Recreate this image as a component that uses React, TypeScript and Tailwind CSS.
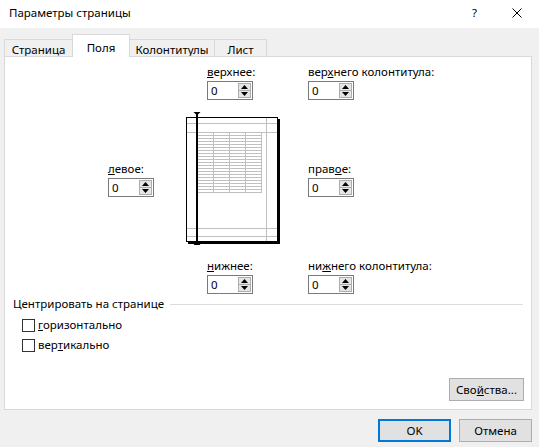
import React from 'react';

function Spin() {
  return (
    <div className="flex h-[19px] w-[46px] border border-[#7a7a7a] bg-white">
      <span className="flex-1 pl-[3px] leading-[17px]">0</span>
      <div className="my-px mr-px flex w-[13px] flex-col border border-[#adadad] bg-[#e5e5e5]">
        <div className="flex flex-1 items-center justify-center border-b border-[#adadad]">
          <svg width="7" height="4" viewBox="0 0 7 4">
            <polygon points="0,4 7,4 3.5,0" fill="#000" />
          </svg>
        </div>
        <div className="flex flex-1 items-center justify-center">
          <svg width="7" height="4" viewBox="0 0 7 4">
            <polygon points="0,0 7,0 3.5,4" fill="#000" />
          </svg>
        </div>
      </div>
    </div>
  );
}

function Field({ label }: { label: React.ReactNode }) {
  return (
    <div className="flex flex-col">
      <span className="h-[14px] whitespace-nowrap leading-[14px]">{label}</span>
      <div className="mt-[2px]">
        <Spin />
      </div>
    </div>
  );
}

function Preview() {
  const rows = [];
  for (let y = 22.5; y <= 83; y += 3) rows.push(y);
  return (
    <svg width="98" height="136" viewBox="0 0 98 136">
      <rect x="4" y="9" width="92" height="125" fill="#000" />
      <rect x="2.5" y="7.5" width="91" height="124" fill="#fff" stroke="#000" />
      {/* header / margins */}
      <line x1="3" y1="13.5" x2="93" y2="13.5" stroke="#c0c0c0" />
      <line x1="3" y1="22.5" x2="93" y2="22.5" stroke="#c0c0c0" />
      <line x1="3" y1="118.5" x2="93" y2="118.5" stroke="#c0c0c0" />
      <line x1="3" y1="126.5" x2="93" y2="126.5" stroke="#c0c0c0" />
      <line x1="82.5" y1="8" x2="82.5" y2="131" stroke="#c0c0c0" />
      {/* table */}
      {rows.map((y) => (
        <line key={y} x1="13" y1={y} x2="78" y2={y} stroke="#c0c0c0" />
      ))}
      {[29.5, 45.5, 61.5, 77.5].map((x) => (
        <line key={x} x1={x} y1="22" x2={x} y2="83" stroke="#c0c0c0" />
      ))}
      {/* selected left margin */}
      <rect x="12" y="3" width="2" height="130" fill="#000" />
      <polygon points="9.5,2 16.5,2 13,5.5" fill="#000" />
      <polygon points="13,131.5 9.5,135 16.5,135" fill="#000" />
    </svg>
  );
}

export default function App() {
  const tabs = [
    { name: 'Страница', w: 'w-[69px]' },
    { name: 'Поля', w: 'w-[58px]', active: true },
    { name: 'Колонтитулы', w: 'w-[86px]' },
    { name: 'Лист', w: 'w-[53px]' },
  ];

  return (
    <div className="flex h-[447px] w-[539px] flex-col bg-[#f0f0f0] font-['Segoe_UI','Noto_Sans',sans-serif] text-[11.5px] text-black">
      {/* Title bar */}
      <div className="flex h-[28px] shrink-0 items-center bg-white pb-[2px] pl-[9px] pr-[17px]">
        <span>Параметры страницы</span>
        <span className="ml-auto">?</span>
        <svg className="ml-[35px]" width="10" height="10" viewBox="0 0 10 10">
          <path d="M0.5 0.5 L9.5 9.5 M9.5 0.5 L0.5 9.5" stroke="#000" strokeWidth="1" />
        </svg>
      </div>

      <div className="flex flex-col pl-[4px] pr-[7px]">
        {/* Tabs */}
        <div className="mt-[7px] flex h-[21px] items-end">
          {tabs.map((t, i) => (
            <div
              key={t.name}
              className={
                t.active
                  ? `relative z-10 -mb-px ${i > 0 ? '-ml-px' : ''} flex h-[23px] items-start justify-center border border-b-0 border-[#d9d9d9] bg-white pt-[4px] ${t.w}`
                  : `${i > 0 ? '-ml-px' : ''} flex h-[17px] items-start justify-center border border-b-0 border-[#d9d9d9] bg-[#f0f0f0] pt-[1px] ${t.w}`
              }
            >
              {t.name}
            </div>
          ))}
        </div>

        {/* Panel */}
        <div className="flex h-[354px] w-[528px] flex-col border border-[#d9d9d9] bg-white">
          <div className="flex pl-[202px] pt-[8px]">
            <div className="w-[101px]">
              <Field label={<><u>в</u>ерхнее:</>} />
            </div>
            <Field label={<>вер<u>х</u>него колонтитула:</>} />
          </div>

          <div className="mt-[10px] flex pl-[103px]">
            <div className="w-[76px] pt-[52px]">
              <Field label={<><u>л</u>евое:</>} />
            </div>
            <Preview />
            <div className="ml-[26px] pt-[52px]">
              <Field label={<>прав<u>о</u>е:</>} />
            </div>
          </div>

          <div className="mt-[13px] flex pl-[202px]">
            <div className="w-[101px]">
              <Field label={<><u>н</u>ижнее:</>} />
            </div>
            <Field label={<>ни<u>ж</u>него колонтитула:</>} />
          </div>

          {/* Center on page */}
          <div className="mt-[2px] flex h-[16px] items-center gap-[6px] pl-[8px] pr-[8px]">
            <span className="whitespace-nowrap">Центрировать на странице</span>
            <div className="h-px flex-1 bg-[#dcdcdc]" />
          </div>
          <div className="mt-[3px] flex h-[20px] items-center gap-[3px] pl-[17px]">
            <div className="h-[13px] w-[13px] border border-[#333] bg-white" />
            <span>
              <u>г</u>оризонтально
            </span>
          </div>
          <div className="flex h-[20px] items-center gap-[3px] pl-[17px]">
            <div className="h-[13px] w-[13px] border border-[#333] bg-white" />
            <span>
              вер<u>т</u>икально
            </span>
          </div>

          <button className="mb-[8px] mr-[7px] mt-auto flex h-[23px] w-[75px] items-center justify-center self-end border border-[#adadad] bg-[#e1e1e1]">
            Сво<u>й</u>ства...
          </button>
        </div>

        {/* Dialog buttons */}
        <div className="mt-[9px] flex justify-end gap-[8px]">
          <button className="flex h-[23px] w-[73px] items-center justify-center border-2 border-[#0078d7] bg-[#e1e1e1]">
            OK
          </button>
          <button className="flex h-[23px] w-[73px] items-center justify-center border border-[#adadad] bg-[#e1e1e1]">
            Отмена
          </button>
        </div>
      </div>
    </div>
  );
}
